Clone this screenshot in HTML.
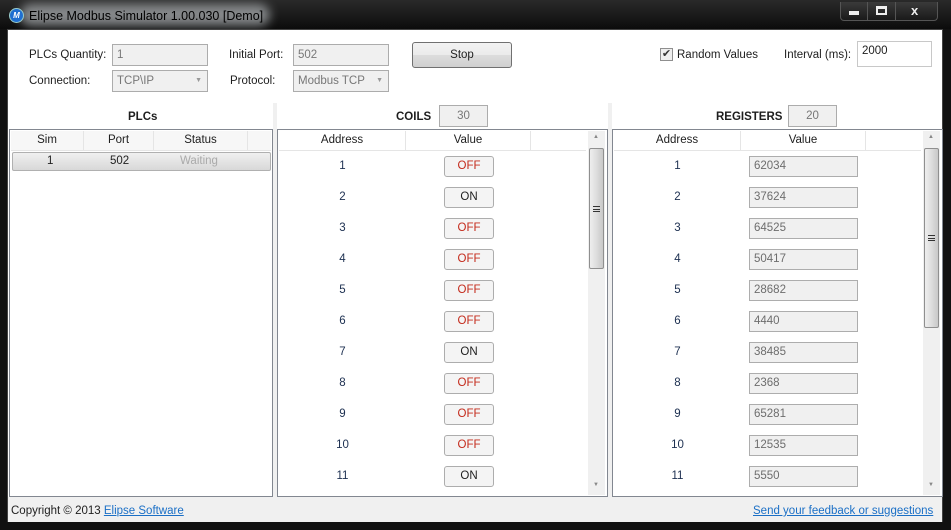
<!DOCTYPE html>
<html><head><style>
*{margin:0;padding:0;box-sizing:border-box}
body{width:951px;height:530px;background:#111;font-family:"Liberation Sans",sans-serif;font-size:11.5px;color:#1e1e1e;position:relative;overflow:hidden}
.a{position:absolute}
.tb{left:0;top:0;width:951px;height:29px;background:linear-gradient(#2a2a2a,#0c0c0c)}
.client{left:7px;top:29px;width:936px;height:493px;background:#fff;border:1px solid #444}
.tbox{position:absolute;background:#f0f0f0;border:1px solid #acacac;color:#777;padding:2px 4px;height:22px;line-height:16px}
.lbl{position:absolute;line-height:14px}
.btn{position:absolute;border:1px solid #707070;border-radius:3px;background:linear-gradient(#f2f2f2,#ebebeb 50%,#dddddd 50%,#cfcfcf);text-align:center}
.panel{position:absolute;border:1px solid #828790;background:#fff}
.hdr{position:absolute;height:20px;background:#fff;border-bottom:1px solid #e5e5e5;line-height:19px;text-align:center}
.hc{position:absolute;top:0;height:20px;border-right:1px solid #e5e5e5;text-align:center}
.sb{position:absolute;width:17px;background:#f0f0f0}
.thumb{position:absolute;left:1px;width:15px;border:1px solid #8f8f8f;border-radius:2px;background:linear-gradient(90deg,#eee,#ddd 50%,#c8c8c8)}
.row{position:absolute;height:31px;line-height:31px;color:#1c2f50;text-align:center}
.cb{position:absolute;width:50px;height:21px;border:1px solid #adadad;border-radius:3px;background:#f4f4f4;line-height:19px;text-align:center}
.rv{position:absolute;width:109px;height:21px;border:1px solid #adadad;background:#f0f0f0;color:#6d6d6d;line-height:19px;padding-left:4px}
.sep{position:absolute;top:103px;width:4px;height:394px;background:#f0f0f0}
a{color:#1a6fc6;text-decoration:underline}
</style></head><body>
<div class="a tb"></div>
<div class="a" style="left:20px;top:4px;width:250px;height:22px;border-radius:12px;background:rgba(220,225,230,.55);filter:blur(5px)"></div>
<div class="a" style="left:9px;top:8px;width:15px;height:15px;border-radius:50%;background:#1f6fd0;border:1px solid #9cc;color:#fff;font-size:8px;font-weight:bold;line-height:13px;text-align:center;font-style:italic">M</div>
<div class="a" style="left:29px;top:8px;color:#000;font-size:12.5px;line-height:16px">Elipse Modbus Simulator 1.00.030 [Demo]</div>
<div class="a" style="left:840px;top:2px;width:98px;height:19px;border:1px solid #555;border-top:none;border-radius:0 0 4px 4px;background:linear-gradient(#3a3a3a,#1a1a1a)"></div>
<div class="a" style="left:867px;top:2px;width:1px;height:19px;background:#555"></div>
<div class="a" style="left:895px;top:2px;width:1px;height:19px;background:#555"></div>
<div class="a" style="left:849px;top:11px;width:10px;height:4px;background:#eee"></div>
<div class="a" style="left:876px;top:6px;width:11px;height:9px;border:2px solid #eee;border-top-width:3px"></div>
<div class="a" style="left:911px;top:3px;color:#eee;font-weight:bold;font-size:13px">x</div>

<div class="a client">
 <div class="lbl" style="left:21px;top:18px">PLCs Quantity:</div>
 <div class="tbox" style="left:104px;top:14px;width:96px">1</div>
 <div class="lbl" style="left:221px;top:18px">Initial Port:</div>
 <div class="tbox" style="left:285px;top:14px;width:96px">502</div>
 <div class="btn" style="left:404px;top:12px;width:100px;height:26px;line-height:24px">Stop</div>
 <div class="lbl" style="left:21px;top:44px">Connection:</div>
 <div class="tbox" style="left:104px;top:40px;width:96px">TCP\IP<span style="position:absolute;right:5px;top:2px;font-size:7px;color:#999">▼</span></div>
 <div class="lbl" style="left:222px;top:44px">Protocol:</div>
 <div class="tbox" style="left:285px;top:40px;width:96px">Modbus TCP<span style="position:absolute;right:5px;top:2px;font-size:7px;color:#999">▼</span></div>
 <div class="a" style="left:652px;top:18px;width:13px;height:13px;border:1px solid #8f8f8f;background:#eee;font-size:11px;line-height:11px;text-align:center;color:#333">✔</div>
 <div class="lbl" style="left:669px;top:18px">Random Values</div>
 <div class="lbl" style="left:776px;top:18px">Interval (ms):</div>
 <div class="a" style="left:849px;top:11px;width:75px;height:26px;border:1px solid #c8c8c8;padding:3px 4px">2000</div>

 <div class="sep" style="left:265px;top:73px"></div>
 <div class="sep" style="left:600px;top:73px"></div>

 <div class="lbl" style="left:120px;top:80px;font-weight:bold">PLCs</div>
 <div class="lbl" style="left:388px;top:80px;font-weight:bold">COILS</div>
 <div class="tbox" style="left:431px;top:75px;width:49px;text-align:center">30</div>
 <div class="lbl" style="left:708px;top:80px;font-weight:bold">REGISTERS</div>
 <div class="tbox" style="left:780px;top:75px;width:49px;text-align:center">20</div>

 <div class="panel" style="left:1px;top:99px;width:264px;height:368px">
  <div class="hdr" style="left:1px;top:1px;width:260px;background:#f7f7f7">
   <div class="hc" style="left:0;width:73px">Sim</div>
   <div class="hc" style="left:73px;width:70px">Port</div>
   <div class="hc" style="left:143px;width:94px">Status</div>
  </div>
  <div class="a" style="left:2px;top:22px;width:259px;height:19px;border:1px solid #b0b0b0;border-radius:2px;background:linear-gradient(#f0f0f0,#d8d8d8);line-height:17px">
   <span class="a" style="left:34px">1</span><span class="a" style="left:97px">502</span><span class="a" style="left:167px;color:#aaa">Waiting</span>
  </div>
 </div>

 <div class="panel" id="c" style="left:269px;top:99px;width:331px;height:368px"></div>
 <div class="panel" id="r" style="left:604px;top:99px;width:331px;height:368px"></div>

 <div class="a" style="left:0;top:467px;width:934px;height:25px;background:#f0f0f0"></div>
 <div class="lbl" style="left:3px;top:474px">Copyright © 2013 <a>Elipse Software</a></div>
 <div class="lbl" style="left:745px;top:474px"><a>Send your feedback or suggestions</a></div>
</div>
<script>
function build(id,coil){
 var p=document.getElementById(id),h='';
 h+='<div class="hdr" style="left:1px;top:1px;width:307px"><div class="hc" style="left:0;width:127px">Address</div><div class="hc" style="left:127px;width:125px">Value</div></div>';
 var on=[2,7,11],regs=[62034,37624,64525,50417,28682,4440,38485,2368,65281,12535,5550];
 for(var i=1;i<=11;i++){
  var y=21+(i-1)*31;
  h+='<div class="row" style="left:1px;top:'+y+'px;width:127px">'+i+'</div>';
  if(coil){var o=on.indexOf(i)>=0;h+='<div class="cb" style="left:166px;top:'+(y+5)+'px;color:'+(o?'#1e1e1e':'#c42b1c')+'">'+(o?'ON':'OFF')+'</div>';}
  else h+='<div class="rv" style="left:136px;top:'+(y+5)+'px">'+regs[i-1]+'</div>';
 }
 var tl=17,th=coil?121:180;
 h+='<div class="sb" style="left:310px;top:1px;height:364px"><div class="a" style="left:5px;top:3px;font-size:6px;color:#888">▲</div><div class="thumb" style="top:'+tl+'px;height:'+th+'px"><div class="a" style="left:3px;top:'+(th/2-4)+'px;width:7px;height:6px;border-top:1px solid #333;border-bottom:1px solid #333"><div style="margin-top:2px;border-top:1px solid #333"></div></div></div><div class="a" style="left:5px;top:351px;font-size:6px;color:#888">▼</div></div>';
 p.innerHTML=h;
}
build('c',true);build('r',false);
</script>
</body></html>
